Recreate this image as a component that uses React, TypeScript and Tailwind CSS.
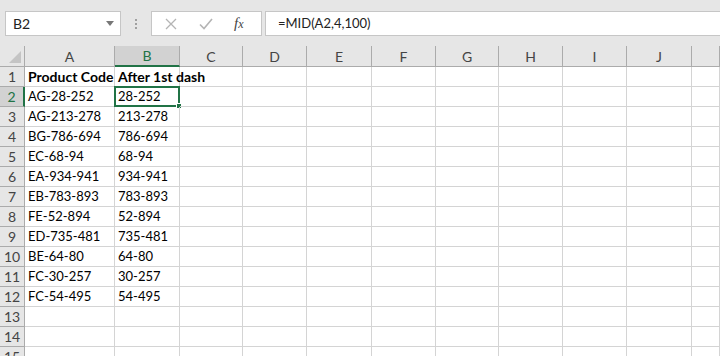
import React from 'react';

const cols = ['A', 'B', 'C', 'D', 'E', 'F', 'G', 'H', 'I', 'J', ''];

const rows: [string, string][] = [
  ['Product Code', 'After 1st dash'],
  ['AG-28-252', '28-252'],
  ['AG-213-278', '213-278'],
  ['BG-786-694', '786-694'],
  ['EC-68-94', '68-94'],
  ['EA-934-941', '934-941'],
  ['EB-783-893', '783-893'],
  ['FE-52-894', '52-894'],
  ['ED-735-481', '735-481'],
  ['BE-64-80', '64-80'],
  ['FC-30-257', '30-257'],
  ['FC-54-495', '54-495'],
  ['', ''],
  ['', ''],
  ['', ''],
];

const FormulaBar = () => (
  <div className="flex h-[46px] items-start bg-[#e6e6e6] pt-[11px]">
    <div className="ml-[5px] flex h-[25px] w-[116px] items-center justify-between border border-[#c6c6c6] bg-white pl-[7px] pr-[6px] text-[14px] text-[#222]">
      <span>B2</span>
      <svg width="8" height="5" viewBox="0 0 8 5">
        <path d="M0 0h8L4 5z" fill="#777" />
      </svg>
    </div>
    <div className="ml-[14px] mt-[8px] flex flex-col gap-[2px]">
      <span className="h-[2px] w-[2px] bg-[#a0a0a0]" />
      <span className="h-[2px] w-[2px] bg-[#a0a0a0]" />
      <span className="h-[2px] w-[2px] bg-[#a0a0a0]" />
    </div>
    <div className="ml-[14px] flex h-[25px] w-[111px] items-center border border-[#c6c6c6] bg-white">
      <svg className="ml-[13px]" width="12" height="12" viewBox="0 0 12 12">
        <path d="M1 1l10 10M11 1L1 11" stroke="#b4b4b4" strokeWidth="1.3" />
      </svg>
      <svg className="ml-[22px]" width="14" height="12" viewBox="0 0 14 12">
        <path d="M1 6.5l4 4L13 1" stroke="#b4b4b4" strokeWidth="1.6" fill="none" />
      </svg>
      <span className="ml-[21px] font-['Liberation_Serif'] text-[15px] italic text-[#444]">
        f<span className="text-[12px]">x</span>
      </span>
    </div>
    <div className="ml-[3px] flex h-[25px] flex-1 items-center border border-r-0 border-[#c6c6c6] bg-white pl-[12px] text-[13px] text-[#222]">
      =MID(A2,4,100)
    </div>
  </div>
);

export default function App() {
  return (
    <div className="h-[356px] w-[720px] overflow-hidden bg-white font-['Lato',sans-serif]">
      <FormulaBar />
      <div className="grid grid-cols-[25px_90px_65px_63px_64px_65px_64px_63px_64px_64px_65px_1fr]">
        <div className="relative h-[21px] border-b border-r border-[#ababab] bg-[#e6e6e6]">
          <svg className="absolute bottom-[3px] right-[3px]" width="12" height="12" viewBox="0 0 12 12">
            <path d="M12 0v12H0z" fill="#c4c4c4" />
          </svg>
        </div>
        {cols.map((c, i) => (
          <div
            key={i}
            className={
              c === 'B'
                ? 'flex h-[21px] items-center justify-center border-b-2 border-r border-b-[#217346] border-r-[#ababab] bg-[#d2d2d2] text-[14px] text-[#217346]'
                : 'flex h-[21px] items-center justify-center border-b border-r border-[#ababab] bg-[#e6e6e6] text-[14px] text-[#444]'
            }
          >
            {c}
          </div>
        ))}
        {rows.map((r, ri) => (
          <React.Fragment key={ri}>
            <div
              className={
                ri === 1
                  ? 'flex h-5 items-center justify-center border-b border-r-2 border-b-[#ababab] border-r-[#217346] bg-[#d2d2d2] text-[14px] text-[#217346]'
                  : 'flex h-5 items-center justify-center border-b border-r border-[#ababab] bg-[#e6e6e6] text-[14px] text-[#444]'
              }
            >
              {ri + 1}
            </div>
            {cols.map((_, ci) => (
              <div
                key={ci}
                className={
                  'relative flex h-5 items-center whitespace-nowrap border-b border-r border-[#d4d4d4] pl-[3px] text-black' +
                  (ri === 0 ? ' text-[14px] font-bold' : ' text-[13px]')
                }
              >
                {ci < 2 ? r[ci] : ''}
                {ri === 1 && ci === 1 && (
                  <div className="absolute -left-px -top-px h-[21px] w-[66px] border-2 border-[#217346]">
                    <div className="absolute -bottom-[4px] -right-[4px] h-[6px] w-[6px] border border-white bg-[#217346]" />
                  </div>
                )}
              </div>
            ))}
          </React.Fragment>
        ))}
      </div>
    </div>
  );
}
